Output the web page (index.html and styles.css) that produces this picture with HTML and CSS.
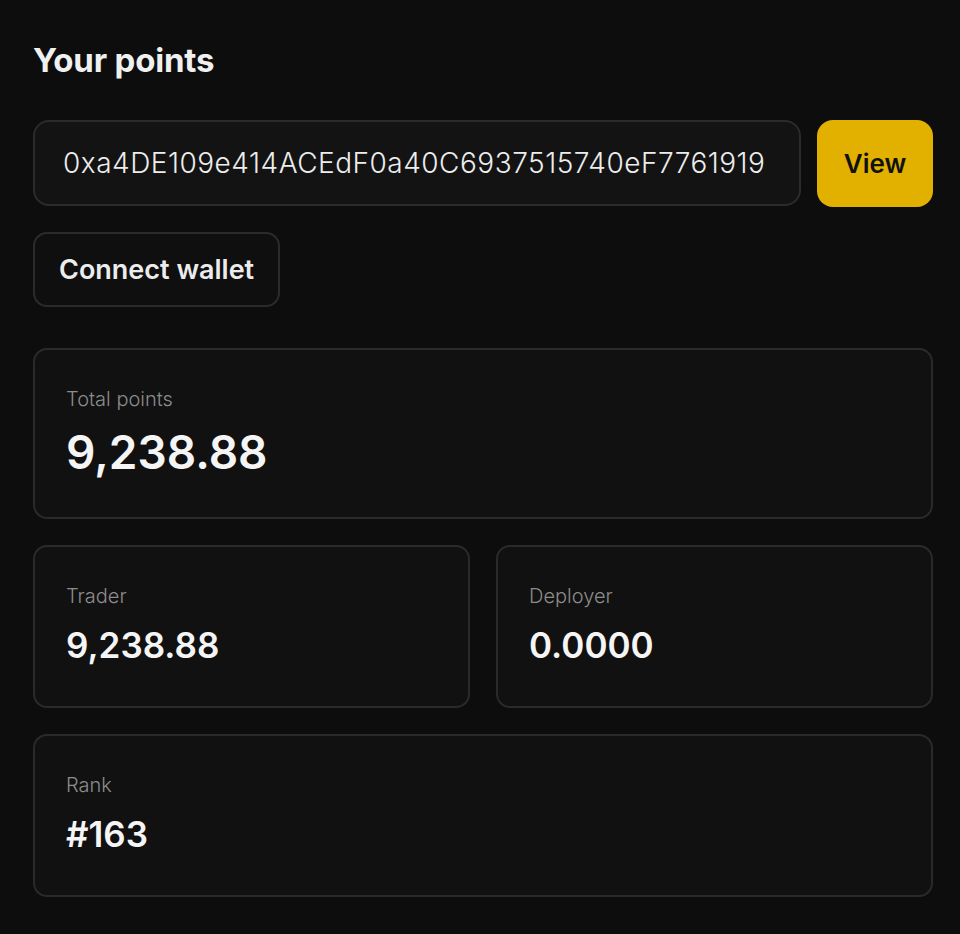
FILE: index.html
```html
<!DOCTYPE html>
<html lang="en">
<head>
    <meta charset="UTF-8">
    <meta name="viewport" content="width=device-width, initial-scale=1.0">
    <title>Your points</title>
    <link rel="stylesheet" href="styles.css">
</head>
<body>
    <main class="points-page">
        <h1 class="page-title">Your points</h1>

        <div class="address-row">
            <input type="text" class="address-input" value="0xa4DE109e414ACEdF0a40C6937515740eF7761919">
            <button class="view-btn">View</button>
        </div>

        <div class="wallet-row">
            <button class="connect-btn">Connect wallet</button>
        </div>

        <section class="stats">
            <div class="stat-card stat-total">
                <div class="stat-label">Total points</div>
                <div class="stat-value big">9,238.88</div>
            </div>

            <div class="stat-split">
                <div class="stat-card">
                    <div class="stat-label">Trader</div>
                    <div class="stat-value">9,238.88</div>
                </div>
                <div class="stat-card">
                    <div class="stat-label">Deployer</div>
                    <div class="stat-value">0.0000</div>
                </div>
            </div>

            <div class="stat-card">
                <div class="stat-label">Rank</div>
                <div class="stat-value">#163</div>
            </div>
        </section>
    </main>
</body>
</html>
```

FILE: styles.css
```css
body {
    margin: 0;
    background-color: #0d0d0d;
    color: #f2f2f2;
    font-family: Inter, 'Noto Sans', sans-serif;
}

.points-page {
    padding: 36px 27px 30px 33px;
}

.page-title {
    margin: 0 0 36px 0;
    font-size: 33px;
    line-height: 48px;
    font-weight: 700;
    color: #f0f0f0;
    letter-spacing: -0.2px;
}

.address-row {
    display: flex;
    gap: 16px;
    margin-bottom: 25px;
}

.address-input {
    flex: 1;
    min-width: 0;
    height: 86px;
    box-sizing: border-box;
    padding: 0 28px;
    background-color: #131313;
    border: 2px solid #2b2b2b;
    border-radius: 16px;
    color: #ededed;
    font-family: Inter, 'Noto Sans', sans-serif;
    font-size: 28px;
    font-weight: 300;
    letter-spacing: 0.5px;
    outline: none;
}

.view-btn {
    width: 116px;
    height: 87px;
    border: none;
    border-radius: 16px;
    background-color: #e2b100;
    color: #111;
    font-family: Inter, 'Noto Sans', sans-serif;
    font-size: 26px;
    font-weight: 600;
    cursor: pointer;
}

.wallet-row {
    margin-bottom: 41px;
}

.connect-btn {
    height: 75px;
    padding: 0 24px;
    background-color: #0f0f0f;
    border: 2px solid #2b2b2b;
    border-radius: 14px;
    color: #ececec;
    font-family: Inter, 'Noto Sans', sans-serif;
    font-size: 27px;
    font-weight: 600;
    cursor: pointer;
}

.stats {
    display: flex;
    flex-direction: column;
    gap: 26px;
}

.stat-split {
    display: grid;
    grid-template-columns: 1fr 1fr;
    gap: 26px;
}

.stat-card {
    box-sizing: border-box;
    height: 163px;
    padding: 36px 31px 0 31px;
    background-color: #111111;
    border: 2px solid #2a2a2a;
    border-radius: 14px;
}

.stat-total {
    height: 171px;
}

.stat-label {
    font-size: 20px;
    line-height: 26px;
    font-weight: 300;
    color: #8c8c8c;
}

.stat-value {
    margin-top: 14px;
    font-size: 35px;
    line-height: 44px;
    font-weight: 600;
    color: #f5f5f5;
}

.stat-value.big {
    margin-top: 12px;
    font-size: 46px;
    line-height: 56px;
}
```
